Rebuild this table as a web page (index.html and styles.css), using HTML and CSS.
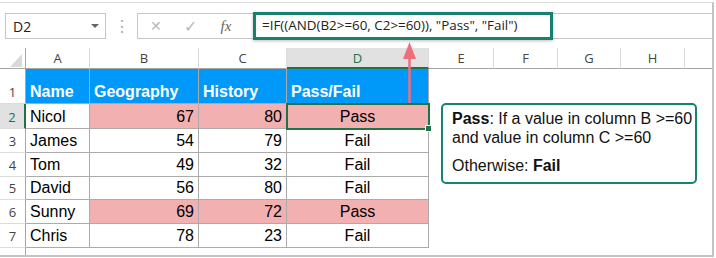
FILE: index.html
```html
<!DOCTYPE html>
<html lang="en">
<head>
    <meta charset="UTF-8">
    <title>Pass/Fail mit IF und AND</title>
    <link rel="stylesheet" href="styles.css">
</head>
<body>
<!-- Arbeitsblatt-Fenster -->
<div class="window">
    <!-- Namensfeld und Bearbeitungsleiste -->
    <div class="toolbar">
        <div class="name-box"><span>D2</span><span class="caret"></span></div>
        <div class="grip">&#8942;</div>
        <div class="formula-bar">
            <span class="fb-btn">&#10005;</span>
            <span class="fb-btn fb-enter">&#10003;</span>
            <span class="fb-btn fb-fx">fx</span>
            <div class="formula">=IF((AND(B2&gt;=60, C2&gt;=60)), "Pass", "Fail")</div>
        </div>
    </div>

    <!-- Zellenraster -->
    <div class="sheet">
        <div class="hd corner"></div>
        <div class="hd">A</div>
        <div class="hd">B</div>
        <div class="hd">C</div>
        <div class="hd hd-active">D</div>
        <div class="hd">E</div>
        <div class="hd">F</div>
        <div class="hd">G</div>
        <div class="hd">H</div>
        <div class="hd hd-last"></div>

        <div class="rn">1</div>
        <div class="c head">Name</div>
        <div class="c head">Geography</div>
        <div class="c head">History</div>
        <div class="c head">Pass/Fail</div>
        <div class="e"></div><div class="e"></div><div class="e"></div><div class="e"></div><div class="e"></div>

        <div class="rn rn-active">2</div>
        <div class="c">Nicol</div>
        <div class="c num pink">67</div>
        <div class="c num pink">80</div>
        <div class="c mid pink selected">Pass</div>
        <div class="e"></div><div class="e"></div><div class="e"></div><div class="e"></div><div class="e"></div>

        <div class="rn">3</div>
        <div class="c">James</div>
        <div class="c num">54</div>
        <div class="c num">79</div>
        <div class="c mid">Fail</div>
        <div class="e"></div><div class="e"></div><div class="e"></div><div class="e"></div><div class="e"></div>

        <div class="rn">4</div>
        <div class="c">Tom</div>
        <div class="c num">49</div>
        <div class="c num">32</div>
        <div class="c mid">Fail</div>
        <div class="e"></div><div class="e"></div><div class="e"></div><div class="e"></div><div class="e"></div>

        <div class="rn">5</div>
        <div class="c">David</div>
        <div class="c num">56</div>
        <div class="c num">80</div>
        <div class="c mid">Fail</div>
        <div class="e"></div><div class="e"></div><div class="e"></div><div class="e"></div><div class="e"></div>

        <div class="rn">6</div>
        <div class="c">Sunny</div>
        <div class="c num pink">69</div>
        <div class="c num pink">72</div>
        <div class="c mid pink">Pass</div>
        <div class="e"></div><div class="e"></div><div class="e"></div><div class="e"></div><div class="e"></div>

        <div class="rn">7</div>
        <div class="c">Chris</div>
        <div class="c num">78</div>
        <div class="c num">23</div>
        <div class="c mid">Fail</div>
        <div class="e"></div><div class="e"></div><div class="e"></div><div class="e"></div><div class="e"></div>

        <div class="rn">8</div>
    </div>

    <!-- Pfeil von der Formel zur Spalte D -->
    <svg class="arrow" width="13" height="64" viewBox="0 0 13 64">
        <line x1="6.5" y1="16" x2="6.5" y2="63" stroke="#ef6e7c" stroke-width="2.5"/>
        <polygon points="6.5,2 0,19 13,19" fill="#ef6e7c"/>
    </svg>

    <!-- Erklärung -->
    <div class="note">
        <p><b>Pass</b>: If a value in column B &gt;=60<br>and value in column C &gt;=60</p>
        <p class="note-else">Otherwise: <b>Fail</b></p>
    </div>
</div>
</body>
</html>
```

FILE: styles.css
```css
/* Grundlayout */
body {
    margin: 0;
    background: #fff;
    font-family: "Liberation Sans", Arial, sans-serif;
}

/* Fensterrahmen */
.window {
    position: relative;
    width: 712px;
    height: 252px;
    margin-top: 2px;
    border-top: 1px solid #dcdcdc;
    border-right: 2px solid #c4c4c4;
    border-bottom: 2px solid #c4c4c4;
    overflow: hidden;
}

/* Namensfeld + Bearbeitungsleiste */
.toolbar {
    display: flex;
    align-items: flex-start;
    height: 45px;
    padding: 10px 0 0 5px;
    box-sizing: border-box;
    font-family: "Open Sans", sans-serif;
}

.name-box {
    display: flex;
    align-items: center;
    justify-content: space-between;
    width: 101px;
    height: 26px;
    padding: 0 6px 0 7px;
    box-sizing: border-box;
    border: 1px solid #c6c6c6;
    font-size: 14px;
    color: #222;
}

.caret {
    width: 0;
    height: 0;
    border-left: 4px solid transparent;
    border-right: 4px solid transparent;
    border-top: 4px solid #666;
}

.grip {
    width: 31px;
    height: 26px;
    line-height: 26px;
    text-align: center;
    color: #aaa;
    font-size: 16px;
}

.formula-bar {
    flex: 1;
    display: flex;
    align-items: flex-start;
    height: 26px;
    box-sizing: border-box;
    border: 1px solid #c6c6c6;
    border-right: none;
}

.fb-btn {
    width: 36px;
    height: 24px;
    line-height: 24px;
    text-align: center;
    color: #b8b8b8;
    font-size: 14px;
}

.fb-enter {
    width: 32px;
    font-size: 16px;
}

.fb-fx {
    width: 40px;
    color: #666;
    font-family: "Liberation Serif", serif;
    font-style: italic;
    font-size: 15px;
}

/* hervorgehobene Formel */
.formula {
    width: 300px;
    height: 28px;
    margin: -2px 0 0 7px;
    padding-left: 6px;
    box-sizing: border-box;
    border: 3px solid #19806f;
    box-shadow: 0 1px 3px rgba(0, 0, 0, 0.25);
    background: #fff;
    font-size: 13.4px;
    line-height: 21px;
    color: #222;
    white-space: nowrap;
}

/* Zellenraster */
.sheet {
    display: grid;
    grid-template-columns: 26px 64px 109px 88px 142px 65px 64px 63px 64px 1fr;
    grid-template-rows: 21px 35px 25px 24px 24px 23px 24px 24px 24px;
}

.sheet > div {
    box-sizing: border-box;
}

/* Spaltenköpfe */
.hd {
    display: flex;
    align-items: center;
    justify-content: center;
    border-right: 1px solid #dcdcdc;
    border-bottom: 1px solid #a6a6a6;
    font-family: "Open Sans", sans-serif;
    font-size: 13px;
    color: #444;
}

.hd-last {
    border-right: none;
}

.hd-active {
    background: #e1e1e1;
    color: #217346;
    border-bottom: 2px solid #217346;
}

.corner {
    align-items: flex-end;
    justify-content: flex-end;
    padding: 0 3px 1px 0;
    border-right: 1px solid #a6a6a6;
}

.corner::after {
    content: "";
    width: 0;
    height: 0;
    border-left: 12px solid transparent;
    border-bottom: 13px solid #d9d9d9;
}

/* Zeilennummern */
.rn {
    display: flex;
    align-items: flex-end;
    justify-content: center;
    padding-bottom: 2px;
    border-right: 1px solid #a6a6a6;
    border-bottom: 1px solid #dcdcdc;
    font-family: "Open Sans", sans-serif;
    font-size: 13px;
    line-height: 18px;
    color: #444;
}

.rn-active {
    background: #e1e1e1;
    color: #217346;
    border-right: 2px solid #217346;
}

/* Datenzellen */
.c {
    display: flex;
    align-items: flex-end;
    padding: 0 4px 1px 4px;
    border-right: 1px solid #ababab;
    border-bottom: 1px solid #ababab;
    font-size: 16px;
    line-height: 20px;
    color: #000;
}

.head {
    background: #0099f9;
    color: #fff;
    font-weight: bold;
}

.num {
    justify-content: flex-end;
}

.mid {
    justify-content: center;
}

.pink {
    background: #f2b1b0;
}

/* aktive Zelle D2 */
.selected {
    position: relative;
    z-index: 1;
    outline: 2px solid #217346;
    outline-offset: -1px;
}

.selected::after {
    content: "";
    position: absolute;
    right: -4px;
    bottom: -4px;
    width: 5px;
    height: 5px;
    background: #217346;
    border: 1px solid #fff;
}

/* Pfeil */
.arrow {
    position: absolute;
    left: 403px;
    top: 37px;
    z-index: 2;
}

/* Erklärungskasten */
.note {
    position: absolute;
    left: 441px;
    top: 100px;
    width: 256px;
    height: 81px;
    box-sizing: border-box;
    padding: 4px 0 0 9px;
    border: 2px solid #168474;
    border-radius: 5px;
    background: #fff;
    font-size: 16px;
    line-height: 19px;
    color: #111;
    white-space: nowrap;
}

.note p {
    margin: 0;
}

.note-else {
    margin-top: 9px !important;
}
```
